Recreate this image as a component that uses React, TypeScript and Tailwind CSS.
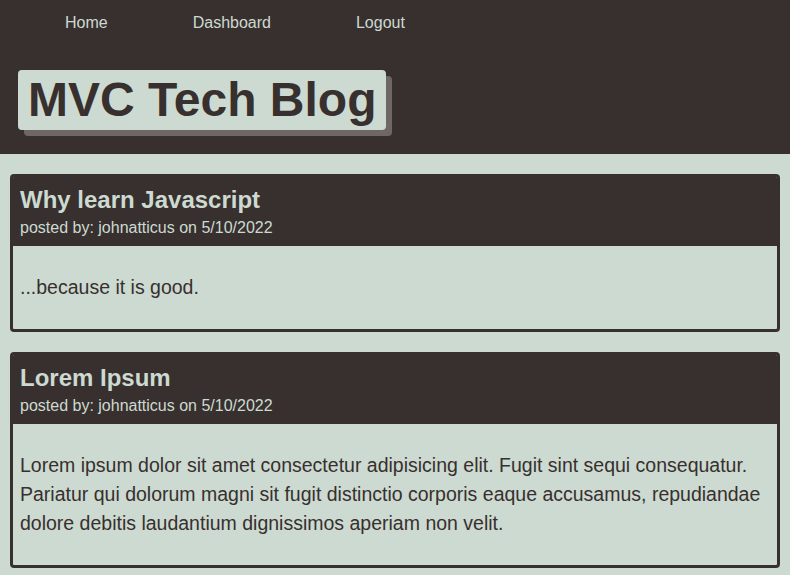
import React from "react";

const posts = [
  {
    title: "Why learn Javascript",
    meta: "posted by: johnatticus on 5/10/2022",
    body: "...because it is good.",
  },
  {
    title: "Lorem Ipsum",
    meta: "posted by: johnatticus on 5/10/2022",
    body:
      "Lorem ipsum dolor sit amet consectetur adipisicing elit. Fugit sint sequi consequatur. Pariatur qui dolorum magni sit fugit distinctio corporis eaque accusamus, repudiandae dolore debitis laudantium dignissimos aperiam non velit.",
  },
];

export default function App() {
  return (
    <div
      className="min-h-[575px] bg-[#CCDAD1] text-[#38302E]"
      style={{ fontFamily: '"Liberation Sans", Arial, sans-serif' }}
    >
      <header className="bg-[#38302E] pt-[14px] pb-[24px]">
        <nav className="flex gap-[85px] pl-[65px] text-[16px] leading-[18px] text-[#CCDAD1]">
          <a href="#">Home</a>
          <a href="#">Dashboard</a>
          <a href="#">Logout</a>
        </nav>
        <div className="mt-[38px] pl-[18px]">
          <h1 className="inline-block rounded-[4px] bg-[#CCDAD1] px-[10px] py-[2px] text-[48px] font-bold leading-[56px] text-[#38302E] shadow-[6px_6px_0_0_#6F6766]">
            MVC Tech Blog
          </h1>
        </div>
      </header>
      <main className="flex flex-col gap-[20px] px-[10px] pt-[20px] pb-[7px]">
        {posts.map((p) => (
          <article
            key={p.title}
            className="overflow-hidden rounded-[4px] border-[3px] border-[#38302E]"
          >
            <div className="bg-[#38302E] px-[7px] pt-[9px] pb-[9px] text-[#CCDAD1]">
              <h2 className="text-[24px] font-bold leading-[28px]">{p.title}</h2>
              <p className="mt-[4px] text-[16px] leading-[19px]">{p.meta}</p>
            </div>
            <div className="px-[7px] py-[27px] text-[19.5px] leading-[29px]">
              <p>{p.body}</p>
            </div>
          </article>
        ))}
      </main>
    </div>
  );
}
